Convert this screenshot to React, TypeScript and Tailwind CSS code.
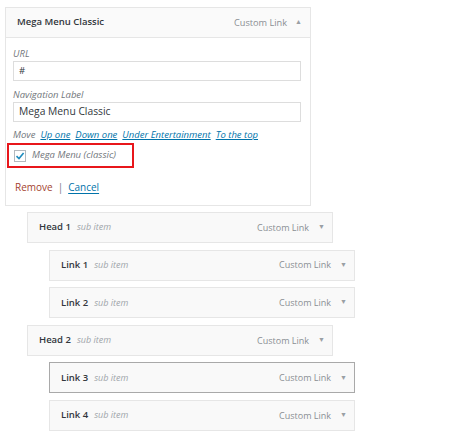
import React from "react";

function Item({ title, indent, dark }: { title: string; indent: boolean; dark?: boolean }) {
  return (
    <div
      className={
        "flex h-[31px] w-[306px] items-center justify-between border bg-[#f9f9f9] pl-[11px] pr-[7px] " +
        (indent ? "ml-[49px] " : "ml-[27px] ") +
        (dark ? "border-[#a9a9a9]" : "border-[#e6e6e6]")
      }
    >
      <div className="flex items-baseline gap-[6px]">
        <span className="text-[9.5px] font-semibold text-[#32373c]">{title}</span>
        <span className="text-[9px] italic text-[#a0a5aa]">sub item</span>
      </div>
      <div className="flex items-center gap-[9px]">
        <span className="text-[9px] text-[#8a8f94]">Custom Link</span>
        <span className="text-[7px] text-[#9a9fa4]">▼</span>
      </div>
    </div>
  );
}

export default function App() {
  return (
    <div
      className="h-[445px] w-[474px] overflow-hidden bg-white pt-[7px]"
      style={{ fontFamily: '"Open Sans", "Liberation Sans", sans-serif' }}
    >
      <div className="ml-[5px] w-[306px] border border-[#e6e6e6]">
        <div className="flex h-[30px] items-center justify-between border-b border-[#e6e6e6] bg-[#fafafa] pl-[11px] pr-[8px]">
          <span className="text-[9.5px] font-semibold text-[#32373c]">Mega Menu Classic</span>
          <div className="flex items-center gap-[8px]">
            <span className="text-[9.2px] text-[#8a8f94]">Custom Link</span>
            <span className="text-[7px] text-[#9a9fa4]">▲</span>
          </div>
        </div>
        <div className="bg-white pb-[11px] pl-[7px] pr-[9px] pt-[9px]">
          <div className="text-[9.5px] italic leading-[14px] text-[#72777c]">URL</div>
          <div className="flex h-[20px] items-center border border-[#dddddd] px-[5px] text-[9.5px] text-[#32373c]">
            #
          </div>
          <div className="mt-[7px] text-[9.5px] italic leading-[14px] text-[#72777c]">Navigation Label</div>
          <div className="flex h-[20px] items-center border border-[#dddddd] px-[5px] text-[10.3px] text-[#32373c]">
            Mega Menu Classic
          </div>
          <div className="mt-[6px] flex gap-[5px] text-[9.5px] italic leading-[14px]">
            <span className="text-[#72777c]">Move</span>
            <span className="text-[#0073aa] underline">Up one</span>
            <span className="text-[#0073aa] underline">Down one</span>
            <span className="text-[#0073aa] underline">Under Entertainment</span>
            <span className="text-[#0073aa] underline">To the top</span>
          </div>
          <div className="-ml-[6px] mt-[1px] flex h-[25px] w-[127px] items-center gap-[6px] border-[2.5px] border-[#e8161b] pl-[5px]">
            <div className="flex h-[12px] w-[12px] items-center justify-center border border-[#b4b9be] bg-white">
              <svg width="10" height="10" viewBox="0 0 10 10">
                <path d="M1.5 5.2 L4 7.6 L8.6 2" fill="none" stroke="#1e8cbe" strokeWidth="1.6" />
              </svg>
            </div>
            <span className="text-[9.5px] italic text-[#72777c]">Mega Menu (classic)</span>
          </div>
          <div className="ml-[2px] mt-[12px] flex items-center gap-[5px] text-[10px] leading-[14px]">
            <span className="text-[#a4432f]">Remove</span>
            <span className="text-[#72777c]">|</span>
            <span className="text-[#0073aa] underline underline-offset-2">Cancel</span>
          </div>
        </div>
      </div>
      <div className="mt-[6px] flex flex-col gap-[6.6px]">
        <Item title="Head 1" indent={false} />
        <Item title="Link 1" indent />
        <Item title="Link 2" indent />
        <Item title="Head 2" indent={false} />
        <Item title="Link 3" indent dark />
        <Item title="Link 4" indent />
      </div>
    </div>
  );
}
